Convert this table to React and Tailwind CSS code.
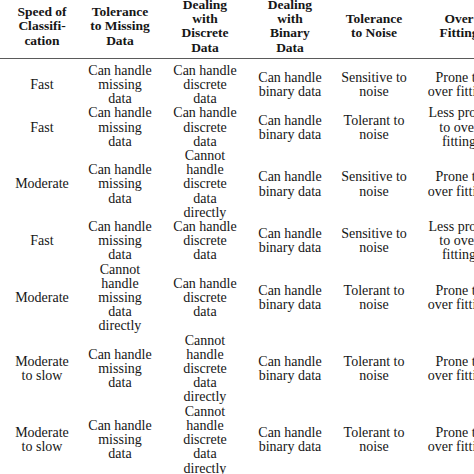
import React from "react";

const widths = ["w-[84px]", "w-[72px]", "w-[98px]", "w-[72px]", "w-[96px]", "w-[74px]"];

const header = [
  ["Speed of", "Classifi-", "cation"],
  ["Tolerance", "to Missing", "Data"],
  ["Dealing", "with", "Discrete", "Data"],
  ["Dealing", "with", "Binary", "Data"],
  ["Tolerance", "to Noise"],
  ["Over", "Fitting"],
];

const canMissing = ["Can handle", "missing", "data"];
const cannotMissing = ["Cannot", "handle", "missing", "data", "directly"];
const canDiscrete = ["Can handle", "discrete", "data"];
const cannotDiscrete = ["Cannot", "handle", "discrete", "data", "directly"];
const binary = ["Can handle", "binary data"];
const sensitive = ["Sensitive to", "noise"];
const tolerant = ["Tolerant to", "noise"];
const prone = ["Prone to", "over fitting"];
const lessProne = ["Less prone", "to over", "fitting"];

const rows = [
  [["Fast"], canMissing, canDiscrete, binary, sensitive, prone],
  [["Fast"], canMissing, canDiscrete, binary, tolerant, lessProne],
  [["Moderate"], canMissing, cannotDiscrete, binary, sensitive, prone],
  [["Fast"], canMissing, canDiscrete, binary, sensitive, lessProne],
  [["Moderate"], cannotMissing, canDiscrete, binary, tolerant, prone],
  [["Moderate", "to slow"], canMissing, cannotDiscrete, binary, tolerant, prone],
  [["Moderate", "to slow"], canMissing, cannotDiscrete, binary, tolerant, prone],
];

function Cell({ lines, i }) {
  return (
    <div className={`${widths[i]} shrink-0 text-center whitespace-nowrap`}>
      {lines.map((l, k) => (
        <div key={k}>{l}</div>
      ))}
    </div>
  );
}

export default function App() {
  return (
    <div
      className="w-[474px] h-[474px] overflow-hidden bg-white text-[#161616] leading-[14.2px]"
      style={{ fontFamily: '"Liberation Serif", "Times New Roman", serif' }}
    >
      <div className="w-[496px]">
        <div className="flex items-center mt-[-2px] pb-[3px] border-b border-[#5a5a5a] font-bold text-[13.5px]">
          {header.map((h, i) => (
            <Cell key={i} lines={h} i={i} />
          ))}
        </div>
        <div className="pt-[5px] text-[14px]">
          {rows.map((r, j) => (
            <div key={j} className="flex items-center">
              {r.map((c, i) => (
                <Cell key={i} lines={c} i={i} />
              ))}
            </div>
          ))}
        </div>
      </div>
    </div>
  );
}
